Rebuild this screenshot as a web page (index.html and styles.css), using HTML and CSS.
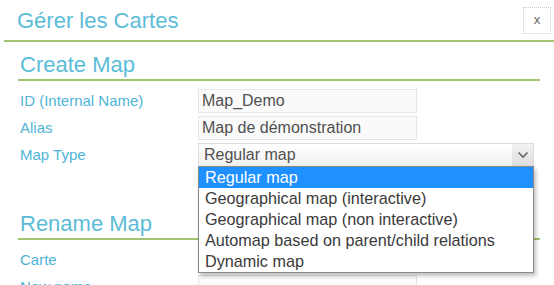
FILE: index.html
```html
<!DOCTYPE html>
<html>
<head>
<meta charset="utf-8">
<link rel="stylesheet" href="styles.css">
</head>
<body>
<div class="dialog">
  <div class="header">
    <div class="title">Gérer les Cartes</div>
    <div class="close">x</div>
  </div>
  <div class="section">
    <h2 class="section-title">Create Map</h2>
    <div class="form">
      <div class="row">
        <div class="label">ID (Internal Name)</div>
        <div class="input">Map_Demo</div>
      </div>
      <div class="row">
        <div class="label">Alias</div>
        <div class="input">Map de démonstration</div>
      </div>
      <div class="row">
        <div class="label">Map Type</div>
        <div class="select-wrap">
          <div class="select">
            <span class="select-text">Regular map</span>
            <span class="select-arrow">
              <svg width="12" height="8" viewBox="0 0 12 8"><path d="M1.5 1.5 L6 6 L10.5 1.5" fill="none" stroke="#666" stroke-width="1.6"/></svg>
            </span>
          </div>
          <div class="dropdown">
            <div class="option selected">Regular map</div>
            <div class="option">Geographical map (interactive)</div>
            <div class="option">Geographical map (non interactive)</div>
            <div class="option">Automap based on parent/child relations</div>
            <div class="option">Dynamic map</div>
          </div>
        </div>
      </div>
    </div>
  </div>
  <div class="section section-rename">
    <h2 class="section-title">Rename Map</h2>
    <div class="form">
      <div class="row">
        <div class="label">Carte</div>
        <div class="input input-wide"></div>
      </div>
      <div class="row">
        <div class="label">New name</div>
        <div class="input"></div>
      </div>
    </div>
  </div>
</div>
</body>
</html>
```

FILE: styles.css
```css
html, body {
  margin: 0;
  padding: 0;
  background: #ffffff;
  font-family: "Liberation Sans", Arial, sans-serif;
  overflow: hidden;
}

.dialog {
  width: 554px;
  height: 285px;
  overflow: hidden;
}

.header {
  margin-left: 4px;
  height: 40px;
  border-bottom: 2px solid #a3c472;
  display: flex;
  justify-content: space-between;
  align-items: flex-start;
  box-sizing: content-box;
}

.title {
  padding-top: 8px;
  padding-left: 13px;
  font-size: 22px;
  line-height: 26px;
  color: #5bbcd8;
}

.close {
  margin-top: 7px;
  margin-right: 3px;
  width: 26px;
  height: 25px;
  border: 1px dotted #c8c8c8;
  color: #666;
  font-size: 13px;
  line-height: 24px;
  text-align: center;
}

.section {
  margin-left: 18px;
  width: 522px;
  margin-top: 10px;
}

.section-rename {
  margin-top: 44px;
}

.section-title {
  margin: 0;
  padding-left: 2px;
  padding-bottom: 1px;
  font-size: 22px;
  line-height: 26px;
  font-weight: normal;
  color: #5bbcd8;
  border-bottom: 2px solid #a3c472;
}

.form {
  margin-top: 8px;
  display: flex;
  flex-direction: column;
  gap: 3px;
}

.row {
  display: flex;
  align-items: center;
  height: 24px;
}

.label {
  width: 180px;
  padding-left: 2px;
  box-sizing: border-box;
  font-size: 15px;
  line-height: 24px;
  color: #4fb4d6;
}

.input {
  width: 219px;
  height: 24px;
  box-sizing: border-box;
  border: 1px solid #e6e6e6;
  background: #fafafa;
  padding-left: 3px;
  font-size: 16px;
  line-height: 22px;
  color: #505050;
}

.input-wide {
  width: 336px;
}

.select-wrap {
  position: relative;
  width: 336px;
  height: 24px;
}

.select {
  width: 336px;
  height: 24px;
  box-sizing: border-box;
  border: 1px solid #dcdcdc;
  background: linear-gradient(#ffffff, #f1f1f1);
  display: flex;
  align-items: center;
  justify-content: space-between;
}

.select-text {
  padding-left: 5px;
  font-size: 16px;
  line-height: 22px;
  color: #505050;
}

.select-arrow {
  width: 21px;
  height: 22px;
  display: flex;
  align-items: center;
  justify-content: center;
  background: linear-gradient(#f3f3f3, #dedede);
}

.dropdown {
  position: absolute;
  top: 23px;
  left: 0;
  width: 336px;
  box-sizing: border-box;
  border: 1px solid #8a8a8a;
  background: #ffffff;
  box-shadow: 2px 3px 4px rgba(0, 0, 0, 0.25);
  z-index: 10;
}

.option {
  height: 21px;
  line-height: 21px;
  padding-left: 6px;
  font-size: 16.2px;
  color: #3a3a3a;
  white-space: nowrap;
}

.option.selected {
  background: #1e90ff;
  color: #ffffff;
}
```
